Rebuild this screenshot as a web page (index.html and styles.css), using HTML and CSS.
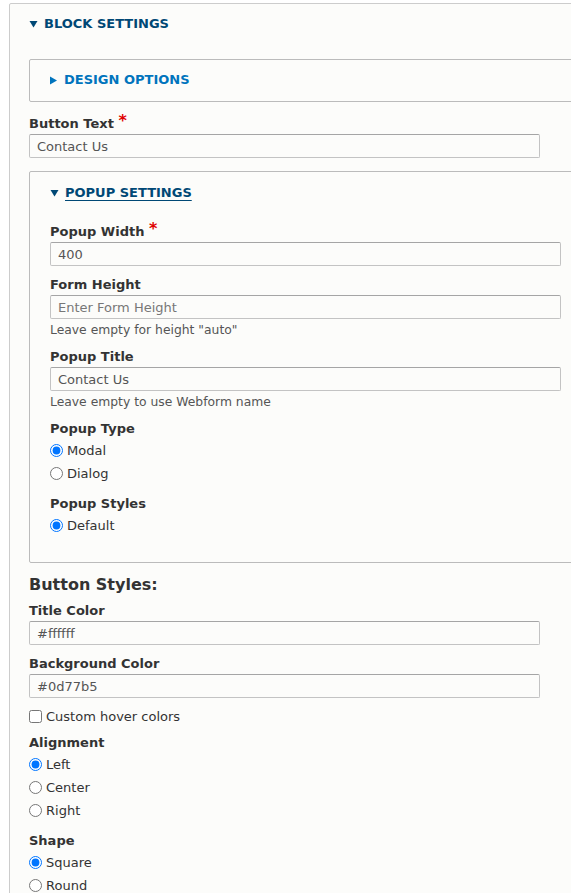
FILE: index.html
```html
<!DOCTYPE html>
<html>
<head>
<meta charset="utf-8">
<link rel="stylesheet" href="styles.css">
</head>
<body>
<div class="panel">
  <div class="summary summary-outer">
    <svg class="tri" width="9" height="8" viewBox="0 0 9 8"><path d="M0.5 1 L8.5 1 L4.5 7.5 Z" fill="#004875"/></svg>
    <span class="sum-text">BLOCK SETTINGS</span>
  </div>

  <div class="box box-closed">
    <div class="summary summary-design">
      <svg class="tri" width="9" height="9" viewBox="0 0 9 9"><path d="M1 0.5 L8 4.5 L1 8.5 Z" fill="#0074bd"/></svg>
      <span class="sum-text">DESIGN OPTIONS</span>
    </div>
  </div>

  <div class="field field-first">
    <label class="label">Button Text <span class="req">*</span></label>
    <input class="text" type="text" value="Contact Us">
  </div>

  <div class="box box-open">
    <div class="summary summary-popup">
      <svg class="tri" width="9" height="8" viewBox="0 0 9 8"><path d="M0.5 1 L8.5 1 L4.5 7.5 Z" fill="#004875"/></svg>
      <span class="sum-text underline">POPUP SETTINGS</span>
    </div>

    <div class="field field-top">
      <label class="label">Popup Width <span class="req">*</span></label>
      <input class="text" type="text" value="400">
    </div>
    <div class="field">
      <label class="label">Form Height</label>
      <input class="text" type="text" placeholder="Enter Form Height">
      <div class="desc">Leave empty for height "auto"</div>
    </div>
    <div class="field">
      <label class="label">Popup Title</label>
      <input class="text" type="text" value="Contact Us">
      <div class="desc">Leave empty to use Webform name</div>
    </div>
    <div class="field">
      <div class="label">Popup Type</div>
      <label class="opt"><input type="radio" name="ptype" checked>Modal</label>
      <label class="opt"><input type="radio" name="ptype">Dialog</label>
    </div>
    <div class="field">
      <div class="label">Popup Styles</div>
      <label class="opt"><input type="radio" name="pstyle" checked>Default</label>
    </div>
  </div>

  <h3 class="heading">Button Styles:</h3>

  <div class="field field-after-h">
    <label class="label">Title Color</label>
    <input class="text" type="text" value="#ffffff">
  </div>
  <div class="field">
    <label class="label">Background Color</label>
    <input class="text" type="text" value="#0d77b5">
  </div>
  <div class="field field-check">
    <label class="opt"><input type="checkbox">Custom hover colors</label>
  </div>
  <div class="field field-align">
    <div class="label">Alignment</div>
    <label class="opt"><input type="radio" name="align" checked>Left</label>
    <label class="opt"><input type="radio" name="align">Center</label>
    <label class="opt"><input type="radio" name="align">Right</label>
  </div>
  <div class="field field-shape">
    <div class="label">Shape</div>
    <label class="opt"><input type="radio" name="shape" checked>Square</label>
    <label class="opt"><input type="radio" name="shape">Round</label>
  </div>
</div>
</body>
</html>
```

FILE: styles.css
```css
html, body {
  margin: 0;
  padding: 0;
  background: #ffffff;
  overflow: hidden;
}
body {
  font-family: "DejaVu Sans", "Liberation Sans", sans-serif;
  font-size: 13px;
  color: #333333;
}
.panel {
  margin: 3px 0 0 9px;
  width: 620px;
  border: 1px solid #cccccc;
  border-radius: 2px;
  background: #fcfcfa;
  padding: 0 19px 40px 19px;
  box-sizing: border-box;
}
.summary {
  display: flex;
  align-items: center;
  font-weight: bold;
  font-size: 13px;
  line-height: 16px;
}
.tri {
  margin-right: 6px;
  flex: none;
}
.summary-outer {
  color: #004875;
  padding-top: 12px;
  height: 16px;
}
.box {
  border: 1px solid #bbbbbb;
  border-radius: 2px;
  background: #fcfcfa;
}
.box-closed {
  margin-top: 27px;
  padding: 12px 20px 13px 19px;
}
.summary-design {
  color: #0074bd;
}
.box-open {
  margin-top: 13px;
  padding: 13px 20px 25px 20px;
}
.summary-popup {
  color: #004875;
}
.underline {
  text-decoration: underline;
  text-underline-offset: 3px;
}
.field {
  display: flex;
  flex-direction: column;
  align-items: flex-start;
  margin-top: 9px;
}
.field-first {
  margin-top: 12px;
}
.field-top {
  margin-top: 21px;
}
.label {
  display: block;
  font-weight: bold;
  line-height: 18px;
  padding-top: 1px;
  margin-bottom: 1px;
  color: #333333;
}
.req {
  color: #e00000;
  font-size: 16px;
  line-height: 0;
  position: relative;
  top: -2px;
}
.text {
  width: 511px;
  height: 24px;
  box-sizing: border-box;
  border: 1px solid #c3c3c3;
  border-top-color: #a5a5a5;
  border-radius: 2px;
  background: #fcfcfa;
  padding: 0 7px;
  font-family: "DejaVu Sans", "Liberation Sans", sans-serif;
  font-size: 13px;
  color: #555555;
  margin: 0;
}
.text::placeholder {
  color: #777777;
}
.desc {
  font-size: 12.35px;
  line-height: 16px;
  color: #555555;
  margin-top: 3px;
}
.opt {
  display: flex;
  align-items: center;
  height: 23px;
  color: #333333;
}
.opt input {
  margin: 0 4px 0 0;
  width: 13px;
  height: 13px;
}
.heading {
  font-size: 16px;
  font-weight: bold;
  line-height: 20px;
  margin: 12px 0 0 0;
  color: #333333;
}
.field-after-h {
  margin-top: 6px;
}
.field-check {
  margin-top: 7px;
}
.field-align {
  margin-top: 5px;
}
.field-shape {
  margin-top: 9px;
}
```
